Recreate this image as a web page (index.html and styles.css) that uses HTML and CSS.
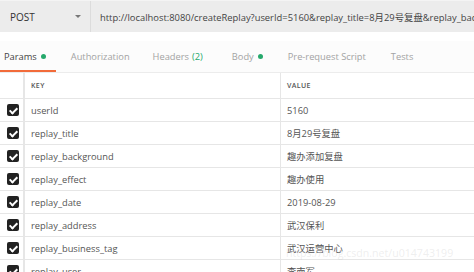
FILE: index.html
```html
<!DOCTYPE html>
<html>
<head>
<meta charset="utf-8">
<link rel="stylesheet" href="styles.css">
</head>
<body>
<div class="topbar">
  <div class="method"><span>POST</span><span class="caret"></span></div>
  <div class="url">http://localhost:8080/createReplay?userId=5160&amp;replay_title=8月29号复盘&amp;replay_background=趣办添加复盘</div>
</div>
<div class="tabs">
  <div class="tab active">Params <span class="dot"></span></div>
  <div class="tab">Authorization</div>
  <div class="tab">Headers <span class="count">(2)</span></div>
  <div class="tab">Body <span class="dot"></span></div>
  <div class="tab">Pre-request Script</div>
  <div class="tab">Tests</div>
</div>
<div class="table">
  <div class="row head">
    <div class="c0"></div>
    <div class="c1">KEY</div>
    <div class="c2">VALUE</div>
  </div>
  <div class="row"><div class="c0"><span class="cb"></span></div><div class="c1">userId</div><div class="c2">5160</div></div>
  <div class="row"><div class="c0"><span class="cb"></span></div><div class="c1">replay_title</div><div class="c2">8月29号复盘</div></div>
  <div class="row"><div class="c0"><span class="cb"></span></div><div class="c1">replay_background</div><div class="c2">趣办添加复盘</div></div>
  <div class="row"><div class="c0"><span class="cb"></span></div><div class="c1">replay_effect</div><div class="c2">趣办使用</div></div>
  <div class="row"><div class="c0"><span class="cb"></span></div><div class="c1">replay_date</div><div class="c2">2019-08-29</div></div>
  <div class="row"><div class="c0"><span class="cb"></span></div><div class="c1">replay_address</div><div class="c2">武汉保利</div></div>
  <div class="row"><div class="c0"><span class="cb"></span></div><div class="c1">replay_business_tag</div><div class="c2">武汉运营中心</div></div>
  <div class="row"><div class="c0"><span class="cb"></span></div><div class="c1">replay_user</div><div class="c2">李南军</div></div>
</div>
<div class="watermark">https://blog.csdn.net/u014743199</div>
</body>
</html>
```

FILE: styles.css
```css
html, body {
  margin: 0;
  padding: 0;
  background: #fff;
  font-family: "Open Sans", "Noto Sans CJK SC", sans-serif;
  color: #505050;
  overflow: hidden;
  width: 474px;
  height: 272px;
  position: relative;
}
.topbar {
  display: flex;
  height: 32px;
  background: #ececec;
  border-top: 1px solid #f4f4f4;
  box-sizing: border-box;
}
.method {
  width: 91px;
  flex: none;
  box-sizing: border-box;
  border-right: 1px solid #dcdcdc;
  display: flex;
  align-items: center;
  justify-content: space-between;
  padding: 0 9px 0 10px;
  font-size: 10px;
  color: #333;
}
.caret {
  width: 0;
  height: 0;
  border-left: 3px solid transparent;
  border-right: 3px solid transparent;
  border-top: 3px solid #777;
}
.url {
  flex: 1;
  min-width: 0;
  padding-left: 9px;
  display: flex;
  align-items: center;
  white-space: nowrap;
  overflow: hidden;
  font-size: 9.4px;
  color: #444;
}
.tabs {
  margin-top: 9px;
  height: 32px;
  display: flex;
  align-items: stretch;
  background: #fcfcfc;
  border-bottom: 1px solid #ececec;
  box-sizing: border-box;
  padding-left: 4px;
}
.tab {
  display: flex;
  align-items: center;
  font-size: 9.3px;
  color: #a3a3a3;
  position: relative;
  white-space: nowrap;
}
.tab.active {
  color: #444;
}
.tab.active::after {
  content: "";
  position: absolute;
  left: -4px;
  right: -10px;
  bottom: 0;
  height: 2px;
  background: #f26b3a;
}
.dot {
  display: inline-block;
  width: 5px;
  height: 5px;
  border-radius: 50%;
  background: #26a96c;
  margin-left: 4px;
}
.count {
  color: #26a96c;
  margin-left: 3px;
}
.tab:nth-child(1) { margin-right: 25px; }
.tab:nth-child(2) { margin-right: 23px; }
.tab:nth-child(3) { margin-right: 29px; }
.tab:nth-child(4) { margin-right: 25px; }
.tab:nth-child(5) { margin-right: 25px; }
.table {
  display: flex;
  flex-direction: column;
}
.row {
  display: grid;
  grid-template-columns: 25px 256px 1fr;
  height: 23px;
  border-bottom: 1px solid #e6e6e6;
  box-sizing: border-box;
  font-size: 9.3px;
  color: #555;
}
.row.head {
  height: 26px;
  font-size: 7px;
  font-weight: 600;
  letter-spacing: 0.4px;
  color: #555;
}
.c0 {
  border-right: 2px solid #e6e6e6;
  display: flex;
  align-items: center;
  justify-content: flex-end;
  padding-right: 4px;
}
.c1 {
  border-right: 1px solid #e6e6e6;
  display: flex;
  align-items: center;
  padding-left: 6px;
}
.c2 {
  display: flex;
  align-items: center;
  padding-left: 6px;
}
.cb {
  width: 12px;
  height: 12px;
  border-radius: 2px;
  background: #222;
  position: relative;
}
.cb::after {
  content: "";
  position: absolute;
  left: 4px;
  top: 1.5px;
  width: 3px;
  height: 6px;
  border-right: 2px solid #fff;
  border-bottom: 2px solid #fff;
  transform: rotate(45deg);
}
.watermark {
  position: absolute;
  left: 286px;
  top: 246px;
  font-size: 10.6px;
  color: rgba(200, 200, 200, 0.3);
  white-space: nowrap;
}
```
